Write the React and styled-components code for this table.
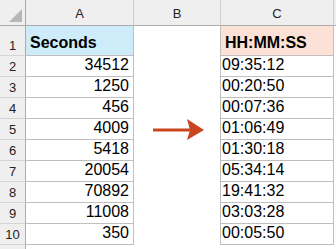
import React from "react";
import styled, { createGlobalStyle, css } from "styled-components";

const GlobalStyle = createGlobalStyle`
  html, body {
    margin: 0;
    padding: 0;
    background: #fff;
  }
  body {
    font-family: "Liberation Sans", Arial, sans-serif;
  }
`;

const Sheet = styled.div`
  width: 336px;
  height: 249px;
  overflow: hidden;
  display: grid;
  grid-template-columns: 26px 108px 87px 113px 1fr;
  grid-template-rows: 26px 30px repeat(9, 21px) 1fr;
  background: #fff;
`;

const Corner = styled.div`
  background: #efefef;
  border-right: 1px solid #ababab;
  border-bottom: 1px solid #ababab;
  position: relative;
  &::after {
    content: "";
    position: absolute;
    right: 3px;
    bottom: 3px;
    width: 0;
    height: 0;
    border-left: 13px solid transparent;
    border-bottom: 13px solid #b7b7b7;
  }
`;

const ColHead = styled.div`
  background: #efefef;
  border-bottom: 1px solid #ababab;
  border-right: ${(p) => (p.$last ? "none" : "1px solid #d0d0d0")};
  display: flex;
  align-items: center;
  justify-content: center;
  font-size: 13px;
  color: #222;
  padding-top: 1px;
`;

const RowHead = styled.div`
  background: #efefef;
  border-right: 1px solid #ababab;
  border-bottom: ${(p) => (p.$last ? "none" : "1px solid #d4d4d4")};
  display: flex;
  align-items: flex-end;
  justify-content: center;
  padding-bottom: 2px;
  font-size: 13px;
  color: #222;
`;

const Cell = styled.div`
  display: flex;
  align-items: flex-end;
  padding: 0 4px 2px 4px;
  font-size: 16px;
  color: #000;
  white-space: nowrap;
  ${(p) =>
    p.$grid &&
    css`
      border-right: 1px solid #bfbfbf;
      border-bottom: 1px solid #bfbfbf;
    `}
  ${(p) => p.$right && css`justify-content: flex-end;`}
  ${(p) => p.$bold && css`font-weight: bold; padding-bottom: 3px;`}
  ${(p) => p.$fill && css`background: ${p.$fill};`}
  ${(p) => p.$tight && css`padding-left: 1px;`}
`;

const LeftCell = styled(Cell)`
  border-left: 1px solid #bfbfbf;
  margin-left: -1px;
`;

const ArrowCell = styled.div`
  display: flex;
  align-items: center;
  justify-content: center;
  padding-left: 2px;
`;

const Blank = styled.div``;

const Arrow = () => (
  <svg width="52" height="22" viewBox="0 0 52 22">
    <rect x="0" y="9.5" width="39" height="3" fill="#c9441f" />
    <polygon points="34,0 51,11 34,21 37,11" fill="#c9441f" />
  </svg>
);

const seconds = [34512, 1250, 456, 4009, 5418, 20054, 70892, 11008, 350];

const toHms = (s) => {
  const pad = (n) => String(n).padStart(2, "0");
  return `${pad(Math.floor(s / 3600))}:${pad(Math.floor((s % 3600) / 60))}:${pad(s % 60)}`;
};

export default function App() {
  return (
    <>
      <GlobalStyle />
      <Sheet>
        <Corner />
        <ColHead>A</ColHead>
        <ColHead>B</ColHead>
        <ColHead>C</ColHead>
        <ColHead $last />

        <RowHead>1</RowHead>
        <Cell $grid $bold $fill="#cdebf9">Seconds</Cell>
        <Blank />
        <LeftCell $grid $bold $fill="#fce2d6">HH:MM:SS</LeftCell>
        <Blank />

        {seconds.map((s, i) => (
          <React.Fragment key={i}>
            <RowHead>{i + 2}</RowHead>
            <Cell $grid $right>{s}</Cell>
            {i === 3 ? (
              <ArrowCell>
                <Arrow />
              </ArrowCell>
            ) : (
              <Blank />
            )}
            <LeftCell $grid $tight>{toHms(s)}</LeftCell>
            <Blank />
          </React.Fragment>
        ))}

        <RowHead $last />
        <Blank />
        <Blank />
        <Blank />
        <Blank />
      </Sheet>
    </>
  );
}
